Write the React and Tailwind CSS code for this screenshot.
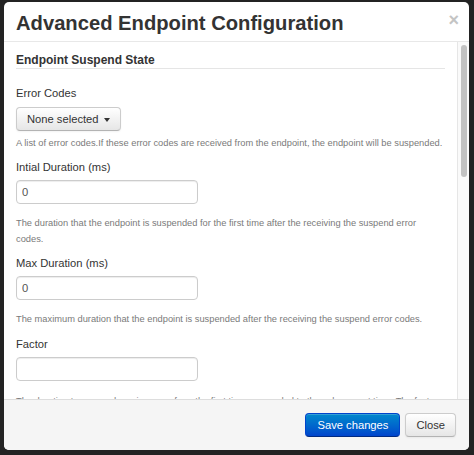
import React from "react";

const Field = ({ label, value, help, helpGap = "mt-[12px]" }) => (
  <div>
    <label className="mt-[8px] mb-[5px] block text-[11.2px] leading-[16px] text-[#333]">
      {label}
    </label>
    <input
      type="text"
      readOnly
      value={value}
      className="block h-[24px] w-[182px] rounded-[4px] border border-[#cccccc] bg-white px-[5px] text-[11.2px] text-[#555] shadow-[inset_0_1px_1px_rgba(0,0,0,0.075)] outline-none"
    />
    <p className={`${helpGap} w-[426px] text-[9.3px] leading-[15.5px] text-[#7a7a7a]`}>
      {help}
    </p>
  </div>
);

const App = () => {
  return (
    <div
      className="flex h-[455px] w-[474px] bg-[#232323] pt-[2px] pr-[5px] pb-[5px] pl-[4px]"
      style={{ fontFamily: '"Liberation Sans", Arial, sans-serif' }}
    >
      <div className="flex flex-1 flex-col overflow-hidden rounded-[5px] bg-white">
        {/* header */}
        <div className="flex h-[40px] shrink-0 items-center justify-between border-b border-[#e8e8e8] pl-[12px] pr-[10px]">
          <h3 className="mt-[2px] text-[20.2px] font-bold leading-[24px] text-[#333]">
            Advanced Endpoint Configuration
          </h3>
          <span className="-mt-[4px] text-[18px] font-bold leading-none text-[#c4c4c4]">
            ×
          </span>
        </div>

        {/* body */}
        <div className="flex min-h-0 flex-1">
          <div className="min-w-0 flex-1 overflow-hidden pl-[12px] pr-[12px] pt-[10px]">
            <h4 className="border-b border-[#e5e5e5] text-[12px] font-bold leading-[16px] text-[#333]">
              Endpoint Suspend State
            </h4>

            <label className="mt-[16px] mb-[6px] block text-[11.2px] leading-[16px] text-[#333]">
              Error Codes
            </label>
            <button className="flex h-[24px] items-center gap-[5px] rounded-[4px] border border-[#cccccc] border-b-[#b3b3b3] bg-gradient-to-b from-white to-[#e6e6e6] px-[10px] text-[11.2px] text-[#333] shadow-[inset_0_1px_0_rgba(255,255,255,0.2),0_1px_2px_rgba(0,0,0,0.05)]">
              None selected
              <span className="mt-[1px] h-0 w-0 border-x-[3.5px] border-t-[4px] border-x-transparent border-t-[#333]" />
            </button>
            <p className="mt-[4px] whitespace-nowrap text-[9.3px] leading-[16px] text-[#7a7a7a]">
              A list of error codes.If these error codes are received from the
              endpoint, the endpoint will be suspended.
            </p>

            <Field
              label="Intial Duration (ms)"
              value="0"
              help="The duration that the endpoint is suspended for the first time after the receiving the suspend error codes."
            />
            <Field
              label="Max Duration (ms)"
              value="0"
              help="The maximum duration that the endpoint is suspended after the receiving the suspend error codes."
            />
            <Field
              label="Factor"
              value=""
              helpGap="mt-[13px]"
              help="The duration to suspend can increase from the first time suspended to the subsequent time. The factor value decides the extent of the increase."
            />
          </div>

          {/* scrollbar */}
          <div className="flex w-[12px] shrink-0 justify-center border-l border-[#e6e6e6] bg-[#fafafa] pt-[3px]">
            <div className="h-[132px] w-[6px] rounded-full bg-[#c2c2c2]" />
          </div>
        </div>

        {/* footer */}
        <div className="flex h-[51px] shrink-0 items-center justify-end gap-[5px] border-t border-[#dddddd] bg-[#f5f5f5] pr-[13px]">
          <button className="h-[24px] rounded-[4px] border border-[#0044cc] border-b-[#002a80] bg-gradient-to-b from-[#0088cc] to-[#0044cc] px-[11px] text-[11.2px] text-white shadow-[inset_0_1px_0_rgba(255,255,255,0.2)]">
            Save changes
          </button>
          <button className="h-[24px] rounded-[4px] border border-[#cccccc] border-b-[#b3b3b3] bg-gradient-to-b from-white to-[#e6e6e6] px-[10px] text-[11.2px] text-[#333] shadow-[0_1px_2px_rgba(0,0,0,0.05)]">
            Close
          </button>
        </div>
      </div>
    </div>
  );
};

export default App;
